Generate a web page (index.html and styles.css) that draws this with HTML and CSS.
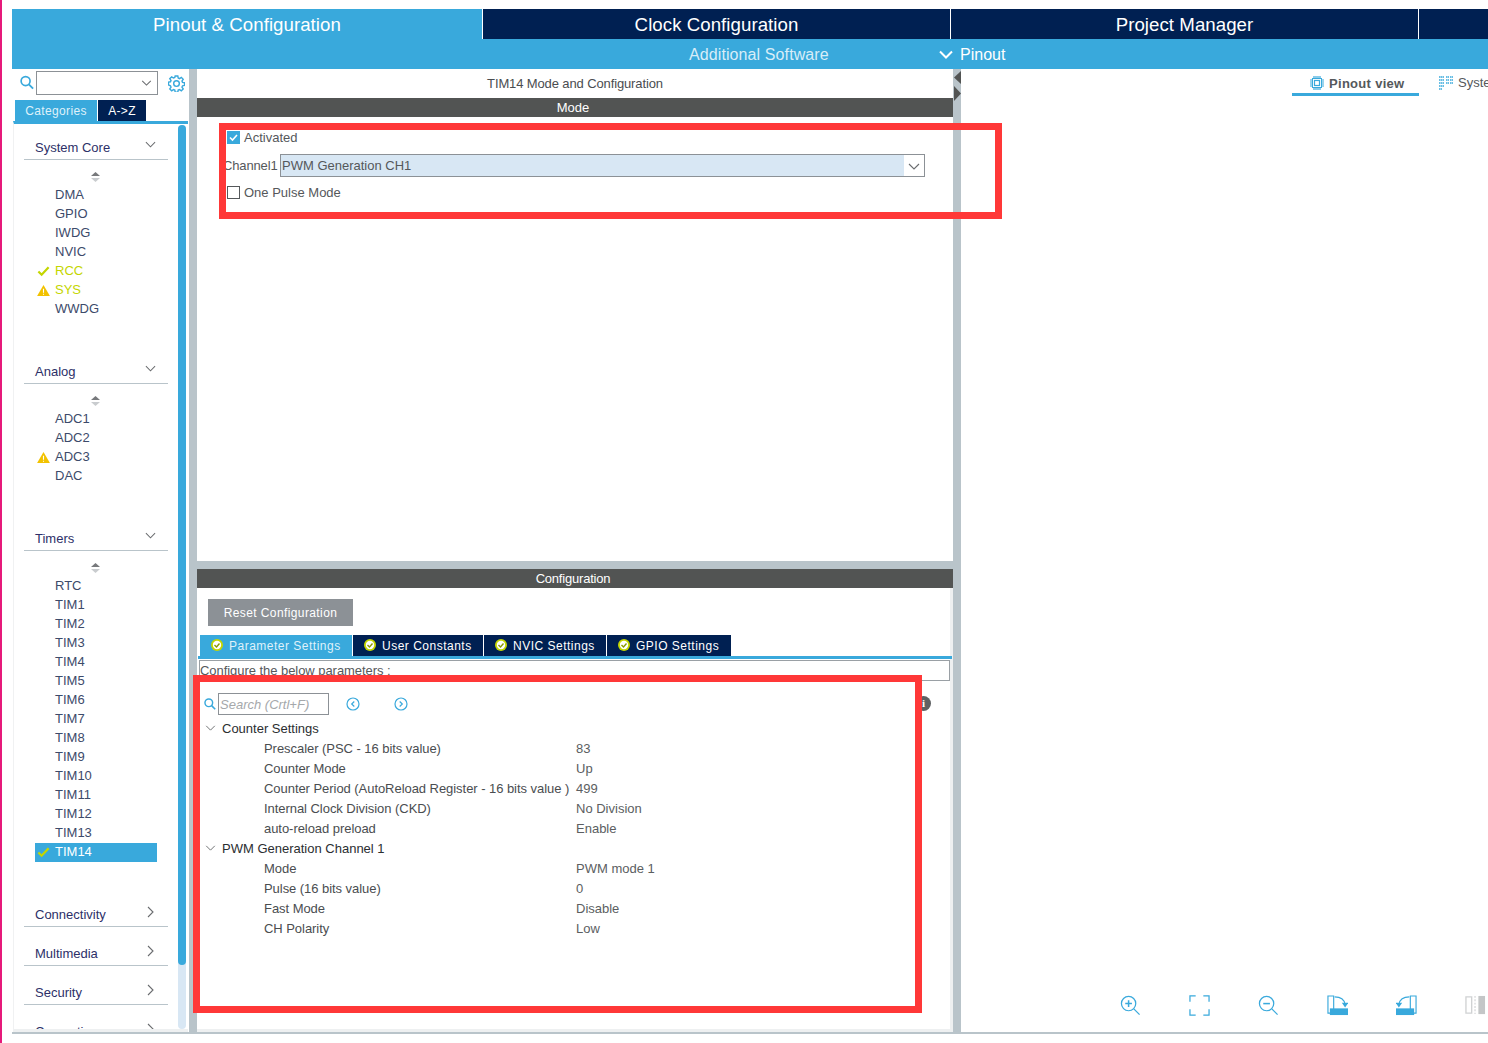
FILE: index.html
```html
<!DOCTYPE html>
<html lang="en">
<head>
<meta charset="utf-8">
<title>TIM14 Mode and Configuration</title>
<link rel="stylesheet" href="styles.css">
</head>
<body>
<div class="pink"></div>
<div class="app">
  <nav class="top-tabs">
    <div class="top-tab active">Pinout &amp; Configuration</div>
    <div class="top-tab">Clock Configuration</div>
    <div class="top-tab">Project Manager</div>
    <div class="top-tab rest"></div>
  </nav>
  <div class="sub-bar">
    <span class="sub-add">Additional Software</span>
    <svg class="sub-chev" viewBox="0 0 14 9"><path d="M1 1.5l6 6 6-6" fill="none" stroke="#fff" stroke-width="2"/></svg>
    <span class="sub-pin">Pinout</span>
  </div>
  <div class="main">
    <aside class="side">
      <div class="side-tools">
        <svg class="ic-search" viewBox="0 0 15 15"><circle cx="6" cy="6" r="4.8" fill="none" stroke="#39a9dc" stroke-width="1.8"/><path d="M9.5 9.5l4.5 4.5" stroke="#39a9dc" stroke-width="2"/></svg>
        <div class="side-input"><svg class="chev" viewBox="0 0 12 7"><path d="M1 1l5 5 5-5" fill="none" stroke="#6a6c6f" stroke-width="1.2"/></svg></div>
        <svg class="ic-gear" viewBox="0 0 18 18"><g fill="none" stroke="#39a9dc" stroke-width="1.5"><circle cx="9" cy="9" r="3"/><path d="M7.6 1h2.8l.4 2.2 1.4.6 1.9-1.3 2 2-1.3 1.9.6 1.4 2.1.4v2.8l-2.1.4-.6 1.4 1.3 1.9-2 2-1.9-1.3-1.4.6-.4 2.1H7.6l-.4-2.1-1.4-.6-1.9 1.3-2-2 1.3-1.9-.6-1.4L.5 10.4V7.6l2.1-.4.6-1.4-1.3-1.9 2-2 1.9 1.3 1.4-.6z"/></g></svg>
      </div>
      <div class="side-tabs"><span class="side-tab on">Categories</span><span class="side-tab">A-&gt;Z</span></div>
      <div class="side-body">
        <div class="side-list">
          <section class="cat">
            <div class="cat-head"><span>System Core</span><svg class="cat-chev" viewBox="0 0 12 7"><path d="M1 1l5 5 5-5" fill="none" stroke="#6a6c6f" stroke-width="1.1"/></svg></div>
            <div class="sort"><svg viewBox="0 0 9 10"><path d="M4.5 0L9 4H0z" fill="#77797c"/><path d="M4.5 10L9 6H0z" fill="#c9cccf"/></svg></div>
            <div class="item">DMA</div>
            <div class="item">GPIO</div>
            <div class="item">IWDG</div>
            <div class="item">NVIC</div>
            <div class="item ok"><svg class="st" viewBox="0 0 14 11"><path d="M1.5 5.500l3.500 3.500 7.500-8" fill="none" stroke="#c4d600" stroke-width="2.4"/></svg>RCC</div>
            <div class="item ok"><svg class="st" viewBox="0 0 14 12"><path d="M7 0l7 12H0z" fill="#f2c200"/><path d="M7 4v4.500M7 9.500v1.200" stroke="#fff" stroke-width="1.200"/></svg>SYS</div>
            <div class="item">WWDG</div>
          </section>
          <section class="cat">
            <div class="cat-head"><span>Analog</span><svg class="cat-chev" viewBox="0 0 12 7"><path d="M1 1l5 5 5-5" fill="none" stroke="#6a6c6f" stroke-width="1.1"/></svg></div>
            <div class="sort"><svg viewBox="0 0 9 10"><path d="M4.5 0L9 4H0z" fill="#77797c"/><path d="M4.5 10L9 6H0z" fill="#c9cccf"/></svg></div>
            <div class="item">ADC1</div>
            <div class="item">ADC2</div>
            <div class="item"><svg class="st" viewBox="0 0 14 12"><path d="M7 0l7 12H0z" fill="#f2c200"/><path d="M7 4v4.500M7 9.500v1.200" stroke="#fff" stroke-width="1.200"/></svg>ADC3</div>
            <div class="item">DAC</div>
          </section>
          <section class="cat">
            <div class="cat-head"><span>Timers</span><svg class="cat-chev" viewBox="0 0 12 7"><path d="M1 1l5 5 5-5" fill="none" stroke="#6a6c6f" stroke-width="1.1"/></svg></div>
            <div class="sort"><svg viewBox="0 0 9 10"><path d="M4.5 0L9 4H0z" fill="#77797c"/><path d="M4.5 10L9 6H0z" fill="#c9cccf"/></svg></div>
            <div class="item">RTC</div>
            <div class="item">TIM1</div>
            <div class="item">TIM2</div>
            <div class="item">TIM3</div>
            <div class="item">TIM4</div>
            <div class="item">TIM5</div>
            <div class="item">TIM6</div>
            <div class="item">TIM7</div>
            <div class="item">TIM8</div>
            <div class="item">TIM9</div>
            <div class="item">TIM10</div>
            <div class="item">TIM11</div>
            <div class="item">TIM12</div>
            <div class="item">TIM13</div>
            <div class="item sel"><svg class="st" viewBox="0 0 14 11"><path d="M1.500 5.500l3.500 3.500 7.500-8" fill="none" stroke="#c4d600" stroke-width="2.400"/></svg>TIM14</div>
          </section>
          <section class="cat closed">
            <div class="cat-head"><span>Connectivity</span><svg class="cat-side" viewBox="0 0 7 12"><path d="M1 1l5 5-5 5" fill="none" stroke="#6a6c6f" stroke-width="1.1"/></svg></div>
          </section>
          <section class="cat closed">
            <div class="cat-head"><span>Multimedia</span><svg class="cat-side" viewBox="0 0 7 12"><path d="M1 1l5 5-5 5" fill="none" stroke="#6a6c6f" stroke-width="1.1"/></svg></div>
          </section>
          <section class="cat closed">
            <div class="cat-head"><span>Security</span><svg class="cat-side" viewBox="0 0 7 12"><path d="M1 1l5 5-5 5" fill="none" stroke="#6a6c6f" stroke-width="1.1"/></svg></div>
          </section>
          <section class="cat closed">
            <div class="cat-head"><span>Computing</span><svg class="cat-side" viewBox="0 0 7 12"><path d="M1 1l5 5-5 5" fill="none" stroke="#6a6c6f" stroke-width="1.1"/></svg></div>
          </section>
        </div>
        <div class="scroll"><div class="thumb"></div></div>
      </div>
    </aside>
    <div class="split-v"></div>
    <div class="center">
      <section class="mode">
        <div class="center-title">TIM14 Mode and Configuration</div>
        <div class="bar">Mode</div>
        <div class="mode-form">
          <label class="check-row"><span class="cb on"><svg viewBox="0 0 13 13"><path d="M3 6.500l2.500 2.500 4.500-5" fill="none" stroke="#fff" stroke-width="1.600"/></svg></span>Activated</label>
          <div class="channel-row"><span class="ch-label">Channel1</span>
            <div class="select"><span class="select-val">PWM Generation CH1</span><span class="select-btn"><svg viewBox="0 0 12 7"><path d="M1 1l5 5 5-5" fill="none" stroke="#6a6c6f" stroke-width="1.1"/></svg></span></div>
          </div>
          <label class="check-row"><span class="cb"></span>One Pulse Mode</label>
        </div>
      </section>
      <div class="split-h"></div>
      <section class="config">
        <div class="bar narrow">Configuration</div>
        <button class="reset">Reset Configuration</button>
        <div class="cfg-tabs">
          <span class="cfg-tab t1 on"><svg class="dot" viewBox="0 0 12 12"><circle cx="6" cy="6" r="6" fill="#c4d600"/><circle cx="6" cy="6" r="4.200" fill="#fff"/><path d="M3.500 6l2 2 3-3.500" fill="none" stroke="#8a9a00" stroke-width="1.400"/></svg>Parameter Settings</span>
          <span class="cfg-tab t2"><svg class="dot" viewBox="0 0 12 12"><circle cx="6" cy="6" r="6" fill="#c4d600"/><circle cx="6" cy="6" r="4.200" fill="#fff"/><path d="M3.500 6l2 2 3-3.500" fill="none" stroke="#8a9a00" stroke-width="1.400"/></svg>User Constants</span>
          <span class="cfg-tab t3"><svg class="dot" viewBox="0 0 12 12"><circle cx="6" cy="6" r="6" fill="#c4d600"/><circle cx="6" cy="6" r="4.200" fill="#fff"/><path d="M3.500 6l2 2 3-3.500" fill="none" stroke="#8a9a00" stroke-width="1.400"/></svg>NVIC Settings</span>
          <span class="cfg-tab t4"><svg class="dot" viewBox="0 0 12 12"><circle cx="6" cy="6" r="6" fill="#c4d600"/><circle cx="6" cy="6" r="4.200" fill="#fff"/><path d="M3.500 6l2 2 3-3.500" fill="none" stroke="#8a9a00" stroke-width="1.400"/></svg>GPIO Settings</span>
        </div>
        <div class="desc">Configure the below parameters :</div>
        <div class="search-row">
          <svg class="ic-search-s" viewBox="0 0 15 15"><circle cx="6" cy="6" r="4.800" fill="none" stroke="#39a9dc" stroke-width="1.800"/><path d="M9.500 9.500l4.500 4.500" stroke="#39a9dc" stroke-width="2"/></svg>
          <div class="search-box">Search (Crtl+F)</div>
          <svg class="nav-ic prev" viewBox="0 0 14 14"><circle cx="7" cy="7" r="6" fill="none" stroke="#39a9dc" stroke-width="1.200"/><path d="M8.300 4.500L5.700 7l2.600 2.500" fill="none" stroke="#39a9dc" stroke-width="1.200"/></svg>
          <svg class="nav-ic next" viewBox="0 0 14 14"><circle cx="7" cy="7" r="6" fill="none" stroke="#39a9dc" stroke-width="1.200"/><path d="M5.700 4.500L8.300 7l-2.600 2.500" fill="none" stroke="#39a9dc" stroke-width="1.200"/></svg>
          <span class="info"><span>i</span></span>
        </div>
        <div class="params">
          <div class="group"><svg class="g-chev" viewBox="0 0 12 7"><path d="M1 1l5 5 5-5" fill="none" stroke="#6a6c6f" stroke-width="1.1"/></svg>Counter Settings</div>
          <div class="param"><span>Prescaler (PSC - 16 bits value)</span><span>83</span></div>
          <div class="param"><span>Counter Mode</span><span>Up</span></div>
          <div class="param"><span>Counter Period (AutoReload Register - 16 bits value )</span><span>499</span></div>
          <div class="param"><span>Internal Clock Division (CKD)</span><span>No Division</span></div>
          <div class="param"><span>auto-reload preload</span><span>Enable</span></div>
          <div class="group"><svg class="g-chev" viewBox="0 0 12 7"><path d="M1 1l5 5 5-5" fill="none" stroke="#6a6c6f" stroke-width="1.1"/></svg>PWM Generation Channel 1</div>
          <div class="param"><span>Mode</span><span>PWM mode 1</span></div>
          <div class="param"><span>Pulse (16 bits value)</span><span>0</span></div>
          <div class="param"><span>Fast Mode</span><span>Disable</span></div>
          <div class="param"><span>CH Polarity</span><span>Low</span></div>
        </div>
      </section>
    </div>
    <div class="split-v grip">
      <svg class="grip-l" viewBox="0 0 7 13"><path d="M7 0v13L0 6.500z" fill="#525453"/></svg>
      <svg class="grip-r" viewBox="0 0 7 15"><path d="M0 0v15l7-7.500z" fill="#525453"/></svg>
    </div>
    <div class="right">
      <div class="view-tabs">
        <span class="view-tab on"><svg class="chip" viewBox="0 0 14 14"><rect x="2.500" y="2.500" width="9" height="9" fill="none" stroke="#39a9dc"/><rect x="4.500" y="4.500" width="5" height="5" fill="none" stroke="#39a9dc" stroke-width="1.200"/><path d="M4 0v2M6 0v2M8 0v2M10 0v2M4 12v2M6 12v2M8 12v2M10 12v2M0 4h2M0 6h2M0 8h2M0 10h2M12 4h2M12 6h2M12 8h2M12 10h2" stroke="#39a9dc" stroke-width="1.200"/></svg>Pinout view</span>
        <span class="view-tab sys"><svg class="chip" viewBox="0 0 14 14"><path d="M0 1h5M0 4h5M0 7h5M0 10h5M0 13h3M7 1h3M7 4h3M7 7h3M11 1h3M11 4h3M11 7h3" stroke="#39a9dc" stroke-width="1.600" stroke-dasharray="1.400 .4"/></svg>System view</span>
      </div>
      <div class="zoom-tools">
        <svg class="tool t-a" viewBox="0 0 22 22"><g fill="none" stroke="#39a9dc" stroke-width="1.300"><circle cx="9" cy="9" r="7.500"/><path d="M14.500 14.500l6 6"/><path d="M9 5.500v7M5.500 9h7" stroke-width="1.600"/></g></svg>
        <svg class="tool t-b" viewBox="0 0 22 22"><path d="M1 7V1h6M15 1h6v6M21 15v6h-6M7 21H1v-6" fill="none" stroke="#39a9dc" stroke-width="1.300"/></svg>
        <svg class="tool t-c" viewBox="0 0 22 22"><g fill="none" stroke="#39a9dc" stroke-width="1.300"><circle cx="9" cy="9" r="7.500"/><path d="M14.500 14.500l6 6"/><path d="M5.500 9h7" stroke-width="1.600"/></g></svg>
        <svg class="tool t-d" viewBox="0 0 22 22"><path d="M1 1h6v18H1z" fill="none" stroke="#39a9dc" stroke-width="1.200"/><path d="M3 14h19v7H3z" fill="#39a9dc"/><path d="M8 2c6 0 10 2 11 8" fill="none" stroke="#39a9dc" stroke-width="1.200"/><path d="M15.500 8h7L19 13z" fill="#39a9dc"/></svg>
        <svg class="tool t-d" viewBox="0 0 22 22"><path d="M15 1h6v18h-6z" fill="none" stroke="#39a9dc" stroke-width="1.200"/><path d="M0 14h19v7H0z" fill="#39a9dc"/><path d="M14 2C8 2 4 4 3 10" fill="none" stroke="#39a9dc" stroke-width="1.200"/><path d="M-.5 8h7L3 13z" fill="#39a9dc"/></svg>
        <svg class="tool t-e" viewBox="0 0 22 22"><path d="M1 2h6v17H1z" fill="none" stroke="#d0d2d3" stroke-width="1.400"/><path d="M10.500 1v19" stroke="#d0d2d3" stroke-width="1.200" stroke-dasharray="2 1.500"/><path d="M14 1h7v19h-7z" fill="#c4c6c7"/></svg>
      </div>
    </div>
  </div>
  <div class="foot-line"></div>
</div>
<div class="mark mark-a"></div>
<div class="mark mark-b"></div>
</body>
</html>
```

FILE: styles.css
```css
* { box-sizing: border-box; }
html, body { margin: 0; height: 1043px; overflow: hidden; background: #fff; }
body { display: flex; font-family: "Liberation Sans", Arial, sans-serif; font-size: 13px; color: #3c4044; position: relative; }
.pink { width: 2px; flex: none; background: #e6197a; }
.app { margin-left: 10px; padding-top: 9px; width: 1476px; flex: none; display: flex; flex-direction: column; height: 1034px; }

.top-tabs { display: flex; height: 30px; flex: none; }
.top-tab { background: #002052; color: #fff; font-size: 18.67px; letter-spacing: .05px; line-height: 31px; height: 30px; text-align: center; width: 468px; border-left: 1px solid #fff; }
.top-tab.active { background: #39a9dc; width: 470px; border-left: 0; }
.top-tab.rest { width: 70px; }
.sub-bar { height: 30px; flex: none; background: #39a9dc; color: #fff; display: flex; align-items: center; font-size: 16px; padding: 1px 0 0 677px; }
.sub-add { color: #d7edf8; width: 250px; letter-spacing: .1px; }
.sub-chev { width: 14px; height: 9px; flex: none; }
.sub-pin { margin-left: 7px; }

.main { display: flex; flex: 1; min-height: 0; }
.side { width: 177px; flex: none; display: flex; flex-direction: column; background: #fff; }
.side-tools { height: 31px; flex: none; display: flex; align-items: flex-start; padding: 2px 0 0 8px; }
.ic-search { width: 14px; height: 15px; margin-top: 4px; flex: none; }
.side-input { width: 122px; height: 24px; margin-left: 2px; border: 1px solid #8c9196; display: flex; align-items: center; justify-content: flex-end; padding-right: 5px; flex: none; }
.chev { width: 11px; height: 6px; }
.ic-gear { width: 17px; height: 17px; margin: 4px 0 0 10px; flex: none; }
.side-tabs { height: 21px; flex: none; display: flex; padding-left: 3px; gap: 1px; }
.side-tab { background: #002052; color: #fff; font-size: 12px; letter-spacing: .35px; line-height: 22px; text-align: center; width: 48px; }
.side-tab.on { background: #39a9dc; width: 82px; color: #dff1fa; }
.side-body { flex: 1; min-height: 0; border-top: 3px solid #39a9dc; margin-left: 1px; margin-right: 1px; display: flex; overflow: hidden; background: #fff; border-left: 1px solid #f0f1f2; border-bottom: 3px solid #eef0f1; }
.side-list { width: 164px; padding: 11px 0 0 10px; flex: none; overflow: hidden; }
.scroll { width: 8px; margin-top: 1px; background: #d8e7f4; border-radius: 4px; }
.thumb { height: 840px; background: #39a9dc; border-radius: 4px; }

.cat { margin-bottom: 40px; width: 144px; }
.cat.closed { margin-bottom: 14px; }
.cat-head { height: 25px; border-bottom: 1px solid #b9c4ca; color: #2d3068; display: flex; justify-content: space-between; padding: 5px 12px 0 11px; line-height: 15px; font-size: 13px; }
.cat-chev { width: 11px; height: 7px; margin-top: 1px; }
.cat-side { width: 7px; height: 12px; margin: -1px 2px 0 0; }
.sort { height: 19px; margin: 7px 0 0 10px; display: flex; justify-content: center; align-items: center; width: 122px; }
.sort svg { width: 9px; height: 10px; }
.item { height: 19px; line-height: 18px; width: 122px; margin-left: 11px; padding-left: 20px; position: relative; color: #3c4a6a; }
.item.ok { color: #c4d600; }
.item.sel { background: #39a9dc; color: #fff; }
.st { position: absolute; left: 2px; top: 4px; width: 13px; height: 11px; }

.split-v { width: 8px; flex: none; background: #b9c4ca; position: relative; }
.grip-l { position: absolute; left: 1px; top: 2px; width: 7px; height: 13px; }
.grip-r { position: absolute; left: 1px; top: 17px; width: 7px; height: 15px; }

.center { width: 756px; flex: none; display: flex; flex-direction: column; }
.mode { height: 492px; flex: none; }
.center-title { height: 29px; line-height: 29px; text-align: center; letter-spacing: -.12px; color: #4a4d50; }
.bar { height: 19px; line-height: 19px; background: #525453; color: #fff; text-align: center; padding-right: 4px; }
.bar.narrow { letter-spacing: -.2px; }
.mode-form { padding: 14px 0 0 30px; }
.check-row { display: flex; align-items: center; height: 13px; gap: 4px; color: #55585b; }
.cb { width: 13px; height: 13px; border: 1px solid #55585b; flex: none; background: #fff; }
.cb svg { display: block; width: 13px; height: 13px; }
.cb.on { background: #39a9dc; border: 0; }
.channel-row { display: flex; align-items: center; height: 23px; margin: 10px 0 9px -4px; }
.ch-label { width: 57px; flex: none; color: #55585b; letter-spacing: -.15px; }
.select { width: 645px; height: 23px; border: 1px solid #8c9196; display: flex; flex: none; }
.select-val { flex: 1; background: #d8e7f4; line-height: 21px; padding-left: 1px; color: #55585b; }
.select-btn { width: 20px; flex: none; display: flex; align-items: center; justify-content: center; padding-top: 1px; }
.select-btn svg { width: 12px; height: 7px; }
.split-h { height: 8px; flex: none; background: #b9c4ca; }

.config { flex: 1; min-height: 0; display: flex; flex-direction: column; border-bottom: 3px solid #eef0f1; border-right: 3px solid #eef0f1; }
.config .bar { margin-right: -3px; flex: none; }
.reset { width: 145px; height: 27px; margin: 11px 0 9px 11px; background: #8c9196; color: #fff; border: 0; font: 12px "Liberation Sans", Arial, sans-serif; letter-spacing: .4px; padding: 0; flex: none; }
.cfg-tabs { height: 24px; flex: none; display: flex; gap: 1px; border-bottom: 3px solid #39a9dc; margin: 0 -2px 0 1px; padding-left: 2px; }
.cfg-tab { height: 21px; background: #002052; color: #fff; font-size: 12px; letter-spacing: .5px; line-height: 22px; display: flex; align-items: center; padding-left: 11px; gap: 6px; flex: none; }
.cfg-tab.on { background: #39a9dc; color: #dff1fa; }
.t1 { width: 152px; } .t2 { width: 130px; } .t3 { width: 122px; } .t4 { width: 124px; }
.dot { width: 12px; height: 12px; flex: none; margin-bottom: 2px; }
.desc { height: 21px; margin: 1px 0 0 2px; width: 751px; border: 1px solid #9aa0a5; line-height: 19px; color: #55585b; flex: none; letter-spacing: -.05px; }
.search-row { height: 22px; margin-top: 12px; padding-left: 7px; display: flex; align-items: center; flex: none; position: relative; }
.ic-search-s { width: 12px; height: 12px; flex: none; }
.search-box { width: 111px; height: 22px; margin-left: 2px; border: 1px solid #8c9196; color: #a5a8ab; font-style: italic; line-height: 21px; padding-left: 1px; flex: none; }
.nav-ic { width: 14px; height: 14px; flex: none; }
.prev { margin-left: 17px; } .next { margin-left: 34px; }
.info { position: absolute; left: 719px; top: 3px; width: 15px; height: 15px; border-radius: 50%; background: #5f6163; color: #fff; font: bold 11px/15px "Liberation Serif", serif; text-align: center; }
.params { padding-top: 3px; }
.group { height: 20px; line-height: 21px; padding-left: 25px; position: relative; color: #2b2e31; }
.g-chev { position: absolute; left: 8px; top: 7px; width: 11px; height: 6px; }
.param { height: 20px; line-height: 21px; display: flex; padding-left: 67px; color: #4a4d50; }
.param span:first-child { width: 312px; flex: none; white-space: nowrap; letter-spacing: -.05px; }
.param span:last-child { color: #5b5e61; }

.right { flex: 1; min-width: 0; overflow: hidden; background: #fff; display: flex; flex-direction: column; justify-content: space-between; }
.view-tabs { height: 27px; flex: none; display: flex; padding-left: 331px; }
.view-tab { display: flex; align-items: center; height: 27px; color: #55585b; white-space: nowrap; padding-top: 3px; flex: none; }
.view-tab.on { width: 127px; border-bottom: 3px solid #39a9dc; padding: 4px 0 0 18px; font-weight: bold; letter-spacing: .3px; }
.view-tab.sys { margin-left: 20px; padding-bottom: 3px; }
.chip { width: 14px; height: 14px; margin-right: 5px; flex: none; }
.zoom-tools { height: 40px; flex: none; display: flex; align-items: center; padding: 0 0 14px 159px; }
.tool { width: 21px; height: 21px; flex: none; }
.t-b, .t-c, .t-d, .t-e { margin-left: 48px; }
.foot-line { height: 2px; flex: none; background: #b9c4ca; }

.mark { position: absolute; border: 7px solid #ff3838; pointer-events: none; }
.mark-a { left: 219px; top: 123px; width: 783px; height: 96px; }
.mark-b { left: 193px; top: 675px; width: 729px; height: 338px; }
```
